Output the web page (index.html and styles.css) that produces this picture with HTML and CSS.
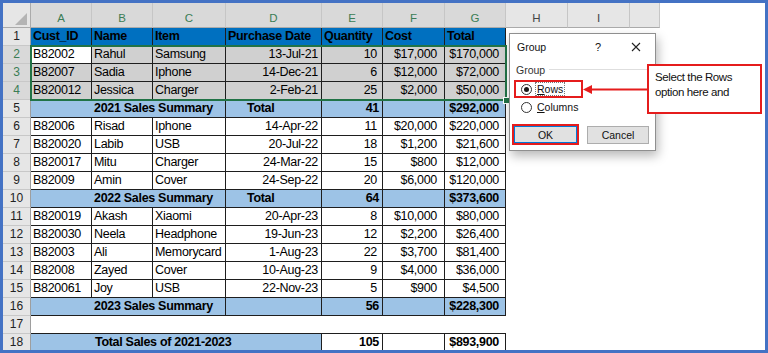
FILE: index.html
```html
<!DOCTYPE html>
<html>
<head>
<meta charset="utf-8">
<link rel="stylesheet" href="styles.css">
</head>
<body>
<div class="frame">
  <div class="sheet">
    <div class="row colhdr">
      <div class="corner"><svg width="12" height="12" viewBox="0 0 12 12"><polygon points="0,12 12,0 12,12" fill="#b4b4b4"/></svg></div>
      <div class="ch s">A</div><div class="ch s">B</div><div class="ch s">C</div><div class="ch s">D</div><div class="ch s">E</div><div class="ch s">F</div><div class="ch s">G</div><div class="ch">H</div><div class="ch">I</div><div class="ch"></div>
    </div>
    <div class="row">
      <div class="rh">1</div>
      <div class="c hd">Cust_ID</div><div class="c hd">Name</div><div class="c hd">Item</div><div class="c hd">Purchase Date</div><div class="c hd">Quantity</div><div class="c hd">Cost</div><div class="c hd">Total</div><div class="rest"></div>
    </div>
    <div class="row">
      <div class="rh s">2</div>
      <div class="c w">B82002</div><div class="c g">Rahul</div><div class="c g">Samsung</div><div class="c g dt">13-Jul-21</div><div class="c g q">10</div><div class="c g cost">$17,000</div><div class="c g tot">$170,000</div><div class="rest"></div>
    </div>
    <div class="row">
      <div class="rh s">3</div>
      <div class="c g">B82007</div><div class="c g">Sadia</div><div class="c g">Iphone</div><div class="c g dt">14-Dec-21</div><div class="c g q">6</div><div class="c g cost">$12,000</div><div class="c g tot">$72,000</div><div class="rest"></div>
    </div>
    <div class="row">
      <div class="rh s">4</div>
      <div class="c g">B820012</div><div class="c g">Jessica</div><div class="c g">Charger</div><div class="c g dt">2-Feb-21</div><div class="c g q">25</div><div class="c g cost">$2,000</div><div class="c g tot">$50,000</div><div class="rest"></div>
    </div>
    <div class="row">
      <div class="rh">5</div>
      <div class="c sum m3">2021 Sales Summary</div><div class="c sum lbl-total">Total</div><div class="c sum qb">41</div><div class="c sum"></div><div class="c sum tot">$292,000</div><div class="rest"></div>
    </div>
    <div class="row">
      <div class="rh">6</div>
      <div class="c">B82006</div><div class="c">Risad</div><div class="c">Iphone</div><div class="c dt">14-Apr-22</div><div class="c q">11</div><div class="c cost">$20,000</div><div class="c tot">$220,000</div><div class="rest"></div>
    </div>
    <div class="row">
      <div class="rh">7</div>
      <div class="c">B820020</div><div class="c">Labib</div><div class="c">USB</div><div class="c dt">20-Jul-22</div><div class="c q">18</div><div class="c cost">$1,200</div><div class="c tot">$21,600</div><div class="rest"></div>
    </div>
    <div class="row">
      <div class="rh">8</div>
      <div class="c">B820017</div><div class="c">Mitu</div><div class="c">Charger</div><div class="c dt">24-Mar-22</div><div class="c q">15</div><div class="c cost">$800</div><div class="c tot">$12,000</div><div class="rest"></div>
    </div>
    <div class="row">
      <div class="rh">9</div>
      <div class="c">B82009</div><div class="c">Amin</div><div class="c">Cover</div><div class="c dt">24-Sep-22</div><div class="c q">20</div><div class="c cost">$6,000</div><div class="c tot">$120,000</div><div class="rest"></div>
    </div>
    <div class="row">
      <div class="rh">10</div>
      <div class="c sum m3">2022 Sales Summary</div><div class="c sum lbl-total">Total</div><div class="c sum qb">64</div><div class="c sum"></div><div class="c sum tot">$373,600</div><div class="rest"></div>
    </div>
    <div class="row">
      <div class="rh">11</div>
      <div class="c">B820019</div><div class="c">Akash</div><div class="c">Xiaomi</div><div class="c dt">20-Apr-23</div><div class="c q">8</div><div class="c cost">$10,000</div><div class="c tot">$80,000</div><div class="rest"></div>
    </div>
    <div class="row">
      <div class="rh">12</div>
      <div class="c">B820030</div><div class="c">Neela</div><div class="c">Headphone</div><div class="c dt">19-Jun-23</div><div class="c q">12</div><div class="c cost">$2,200</div><div class="c tot">$26,400</div><div class="rest"></div>
    </div>
    <div class="row">
      <div class="rh">13</div>
      <div class="c">B82003</div><div class="c">Ali</div><div class="c">Memorycard</div><div class="c dt">1-Aug-23</div><div class="c q">22</div><div class="c cost">$3,700</div><div class="c tot">$81,400</div><div class="rest"></div>
    </div>
    <div class="row">
      <div class="rh">14</div>
      <div class="c">B82008</div><div class="c">Zayed</div><div class="c">Cover</div><div class="c dt">10-Aug-23</div><div class="c q">9</div><div class="c cost">$4,000</div><div class="c tot">$36,000</div><div class="rest"></div>
    </div>
    <div class="row">
      <div class="rh">15</div>
      <div class="c">B820061</div><div class="c">Joy</div><div class="c">USB</div><div class="c dt">22-Nov-23</div><div class="c q">5</div><div class="c cost">$900</div><div class="c tot">$4,500</div><div class="rest"></div>
    </div>
    <div class="row">
      <div class="rh">16</div>
      <div class="c sum m3">2023 Sales Summary</div><div class="c sum"></div><div class="c sum qb">56</div><div class="c sum"></div><div class="c sum tot">$228,300</div><div class="rest"></div>
    </div>
    <div class="row">
      <div class="rh">17</div>
      <div class="blank"></div><div class="rest"></div>
    </div>
    <div class="row">
      <div class="rh">18</div>
      <div class="c sum m4">Total Sales of 2021-2023</div><div class="c b qb">105</div><div class="c"></div><div class="c b tot">$893,900</div><div class="rest"></div>
    </div>
  </div>

  <div class="selection"><span class="handle"></span></div>

  <div class="dialog">
    <div class="dlg-title">
      <span class="dlg-name">Group</span>
      <span class="help">?</span>
      <span class="close"><svg width="10" height="10" viewBox="0 0 10 10"><path d="M1 1 L9 9 M9 1 L1 9" stroke="#222" stroke-width="1.1" fill="none"/></svg></span>
    </div>
    <div class="grp">Group</div>
    <div class="opt hl"><span class="radio on"></span><span class="lbl focus"><u>R</u>ows</span></div>
    <div class="opt"><span class="radio"></span><span class="lbl"><u>C</u>olumns</span></div>
    <div class="btns">
      <div class="okwrap"><div class="btn ok">OK</div></div>
      <div class="btn cancel">Cancel</div>
    </div>
  </div>

  <svg class="arrow" width="68" height="12" viewBox="0 0 68 12"><line x1="9" y1="5.5" x2="68" y2="5.5" stroke="#e51c1c" stroke-width="2"/><polygon points="2,5.5 11,1 11,10" fill="#e51c1c"/></svg>

  <div class="callout">Select the Rows<br>option here and</div>
</div>
</body>
</html>
```

FILE: styles.css
```css
* { box-sizing: border-box; margin: 0; padding: 0; }
body { margin: 0; background: #fff; font-family: "Liberation Sans", Arial, sans-serif; }

.frame {
  position: relative;
  width: 768px;
  height: 353px;
  border: 3px solid #4472c4;
  overflow: hidden;
  background: #fff;
}

.sheet {
  width: 657px;
  height: 100%;
  overflow: hidden;
  font-size: 12.5px;
  letter-spacing: -0.3px;
  color: #000;
}

.row {
  display: grid;
  grid-template-columns: 28px 61px 61px 73px 96px 61px 62px 61px 62px 62px 30px;
  height: 18px;
}
.colhdr { height: 25px; }

.corner {
  background: #e6e6e6;
  border-right: 1px solid #ababab;
  border-bottom: 1px solid #ababab;
  display: flex;
  align-items: flex-end;
  justify-content: flex-end;
  padding: 0 3px 2px 0;
}
.ch {
  background: #e6e6e6;
  border-right: 1px solid #c6c6c6;
  border-bottom: 1px solid #ababab;
  text-align: center;
  font-size: 11.5px;
  letter-spacing: 0;
  color: #444;
  padding-top: 7px;
  line-height: 17px;
}
.ch.s { background: #d9d9d9; color: #3b7d55; }

.rh {
  background: #e6e6e6;
  border-right: 1px solid #9e9e9e;
  border-bottom: 1px solid #c8c8c8;
  text-align: center;
  font-size: 12px;
  letter-spacing: 0;
  line-height: 17px;
  color: #222;
}
.rh.s { background: #d9d9d9; color: #3b7d55; }

.c {
  border-right: 1px solid #1e1e1e;
  border-bottom: 1px solid #1e1e1e;
  padding: 0 2px;
  line-height: 17px;
  white-space: nowrap;
  overflow: hidden;
}
.hd { background: #0070c0; font-weight: bold; }
.g { background: #d0d0d0; }
.w { background: #fff; }
.sum { background: #9dc3e6; font-weight: bold; }
.b { font-weight: bold; }

.dt { text-align: right; padding-right: 3px; }
.q { text-align: right; padding-right: 5px; }
.qb { text-align: right; padding-right: 3px; }
.cost { text-align: right; padding-right: 7px; }
.tot { text-align: right; padding-right: 6px; }
.lbl-total { padding-left: 21px; }

.m3 { grid-column: span 3; padding-left: 63px; }
.m4 { grid-column: span 4; padding-left: 64px; }
.rest { grid-column: span 3; }
.blank { grid-column: span 7; border-bottom: 1px solid #1e1e1e; }

.selection {
  position: absolute;
  left: 27px;
  top: 42px;
  width: 477px;
  height: 56px;
  border: 2px solid #217346;
}
.handle {
  position: absolute;
  right: -5px;
  bottom: -5px;
  width: 7px;
  height: 7px;
  background: #217346;
  border: 1px solid #fff;
}

.dialog {
  position: absolute;
  left: 506px;
  top: 30px;
  width: 147px;
  height: 118px;
  background: #fff;
  border: 1px solid #8f8f8f;
  box-shadow: 2px 5px 10px rgba(0, 0, 0, 0.28);
  font-size: 10.5px;
  color: #111;
}
.dlg-title {
  height: 25px;
  display: flex;
  align-items: center;
  padding-left: 7px;
}
.dlg-name { flex: 1; }
.help { width: 16px; text-align: center; margin-right: 22px; font-size: 11px; }
.close { width: 16px; display: flex; justify-content: center; margin-right: 11px; }

.grp {
  height: 21px;
  display: flex;
  align-items: center;
  padding-left: 6px;
  color: #333;
}
.grp::after {
  content: "";
  flex: 1;
  height: 1px;
  background: #dedede;
  margin: 0 4px 0 4px;
}

.opt {
  height: 18px;
  width: 69px;
  margin-left: 4px;
  border: 2px solid transparent;
  display: flex;
  align-items: center;
  padding-left: 5px;
  gap: 4px;
}
.opt.hl { border-color: #e51c1c; }
.radio {
  width: 11px;
  height: 11px;
  border: 1px solid #333;
  border-radius: 50%;
  background: #fff;
  display: flex;
  align-items: center;
  justify-content: center;
  flex: none;
}
.radio.on::after {
  content: "";
  width: 5px;
  height: 5px;
  border-radius: 50%;
  background: #1a1a1a;
}
.lbl { line-height: 12px; padding: 0 1px; }
.focus { outline: 1px dotted #777; }

.btns {
  display: flex;
  align-items: flex-start;
  margin-top: 8px;
  padding-left: 2px;
}
.okwrap {
  width: 67px;
  height: 21px;
  border: 2px solid #e51c1c;
}
.btn {
  background: #e1e1e1;
  display: flex;
  align-items: center;
  justify-content: center;
}
.ok {
  width: 100%;
  height: 100%;
  border: 1px solid #0078d7;
}
.cancel {
  width: 62px;
  height: 18px;
  margin-left: 8px;
  margin-top: 2px;
  border: 1px solid #adadad;
}

.arrow {
  position: absolute;
  left: 578px;
  top: 81px;
}

.callout {
  position: absolute;
  left: 644px;
  top: 61px;
  width: 115px;
  height: 50px;
  border: 2px solid #e51c1c;
  background: #fff;
  padding: 4px 0 0 6px;
  font-size: 11.5px;
  line-height: 14.5px;
  letter-spacing: -0.4px;
  color: #111;
}
```
